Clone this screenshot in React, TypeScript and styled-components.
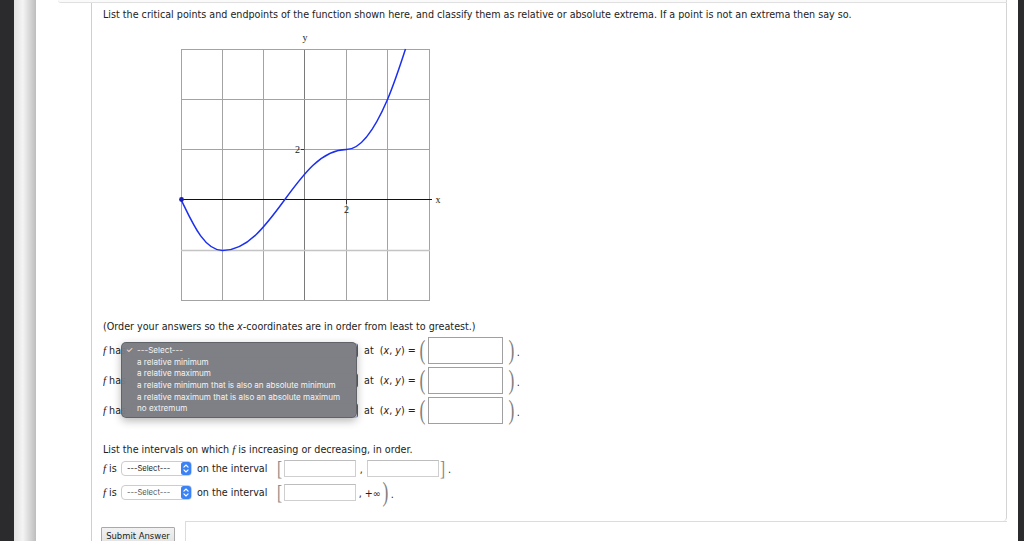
import React from 'react';
import styled, { createGlobalStyle } from 'styled-components';

const GlobalStyle = createGlobalStyle`
  html, body {
    margin: 0;
    padding: 0;
    background: #fff;
  }
  body {
    font-family: "DejaVu Sans", Verdana, sans-serif;
    color: #222;
  }
  * {
    box-sizing: border-box;
  }
`;

const Screen = styled.div`
  display: flex;
  width: 1024px;
  height: 541px;
  overflow: hidden;
`;

const DarkEdge = styled.div<{ $w: number }>`
  flex: 0 0 ${p => p.$w}px;
  background: #2b2b2e;
`;

const Shade = styled.div`
  flex: 0 0 22px;
  background: linear-gradient(to right, #e2e2e2 0%, #f4f4f4 40%, #bdbdbd 100%);
`;

const Main = styled.div`
  flex: 1;
  display: flex;
  flex-direction: column;
  padding-right: 11px;
  background: #fff;
`;

const TopStrip = styled.div`
  flex: none;
  height: 3px;
  margin-left: 22px;
  background: #fafafa;
  border-bottom: 1px solid #e0e0e0;
  border-right: 1px solid #d6d6d6;
  border-bottom-left-radius: 4px;
`;

const Panel = styled.div`
  flex: 1;
  margin-left: 55px;
  display: flex;
  flex-direction: column;
  border-left: 1px solid #cfcfcf;
`;

const QuestionBox = styled.div`
  flex: 0 0 518px;
  padding-left: 11px;
  border-right: 1px solid #d4d4d4;
  border-bottom-right-radius: 4px;
  font-size: 9.6px;
`;

const Line = styled.div<{ $mt: number }>`
  margin-top: ${p => p.$mt}px;
  height: 14px;
  line-height: 14px;
  font-size: 9.6px;
  white-space: nowrap;
`;

const Var = styled.i`
  font-family: "Liberation Serif", "DejaVu Serif", serif;
  font-size: 11px;
  font-style: italic;
`;

const SansVar = styled.i`
  font-style: italic;
`;

const GraphBox = styled.div`
  margin: 8px 0 0 67px;
  width: 280px;
  height: 280px;
  svg {
    display: block;
  }
`;

const Answers = styled.div`
  position: relative;
  margin-top: 1px;
`;

const AnswerRow = styled.div`
  display: flex;
  align-items: center;
  height: 30px;
  white-space: nowrap;
`;

const Has = styled.span`
  flex: 0 0 28px;
  overflow: hidden;
`;

const PointSelect = styled.div`
  flex: 0 0 227px;
  height: 15px;
  border: 1px solid #c8c8c8;
  border-right: 1px solid #3560c4;
  border-radius: 3px;
  background: #fff;
`;

const AtText = styled.span`
  margin-left: 6px;
`;

const Paren = styled.span<{ $ml: number }>`
  margin-left: ${p => p.$ml}px;
  font-family: "Liberation Serif", "DejaVu Serif", serif;
  font-size: 27px;
  line-height: 27px;
  color: #808080;
  transform: scaleX(0.65);
`;

const Dot = styled.span`
  font-size: 9.6px;
  align-self: center;
  margin-left: 1px;
  padding-top: 4px;
`;

const CoordInput = styled.input`
  margin-left: 1px;
  width: 75px;
  height: 27px;
  border: 1px solid #a0a0a0;
  border-radius: 0;
  background: #fff;
  padding: 0;
`;

const Menu = styled.div`
  position: absolute;
  left: 18px;
  top: 7px;
  width: 236px;
  height: 76px;
  padding: 2px 0 4px;
  background: rgba(122, 124, 130, 0.97);
  border: 1px solid rgba(90, 92, 98, 0.8);
  border-radius: 5px;
  box-shadow: 0 3px 9px rgba(0, 0, 0, 0.28);
  font-family: Inter, "Liberation Sans", sans-serif;
  font-size: 8.1px;
  color: #f4f4f4;
`;

const MenuItem = styled.div`
  position: relative;
  height: 11.7px;
  line-height: 11.7px;
  padding-left: 15px;
  white-space: nowrap;
`;

const Check = styled.span`
  position: absolute;
  left: 4px;
  top: 0;
  font-size: 8px;
`;

const IntervalRow = styled.div`
  display: flex;
  align-items: center;
  height: 24px;
  white-space: nowrap;
`;

const Is = styled.span`
  flex: 0 0 18px;
`;

const MiniSelect = styled.div<{ $muted?: boolean }>`
  flex: 0 0 71px;
  height: 15px;
  display: flex;
  align-items: center;
  justify-content: space-between;
  padding: 0 0 0 5px;
  border: 1px solid #cdcdcd;
  border-radius: 4px;
  background: #fff;
  font-family: Inter, "Liberation Sans", sans-serif;
  font-size: 7.6px;
  color: ${p => (p.$muted ? '#555' : '#222')};
  svg {
    display: block;
  }
`;

const OnText = styled.span`
  margin-left: 5px;
`;

const Bracket = styled.span<{ $ml: number }>`
  margin-left: ${p => p.$ml}px;
  font-family: "Liberation Serif", "DejaVu Serif", serif;
  font-size: 22px;
  line-height: 22px;
  color: #8a8a8a;
  transform: scaleX(0.7);
`;

const RangeInput = styled.input<{ $ml: number }>`
  margin-left: ${p => p.$ml}px;
  width: 72px;
  height: 17px;
  padding: 0;
  border: 1px solid #cfcfcf;
  border-top-color: #bdbdbd;
  border-radius: 0;
  background: #fff;
`;

const Comma = styled.span<{ $ml: number }>`
  margin-left: ${p => p.$ml}px;
  padding-top: 3px;
`;

const Footer = styled.div`
  display: flex;
  align-items: flex-start;
  flex: 1;
`;

const SubmitButton = styled.button`
  margin: 6px 0 0 9px;
  width: 74px;
  height: 17px;
  padding: 0;
  border: 1px solid #a9a9a9;
  border-radius: 1px;
  background: linear-gradient(#f2f2f2, #e2e2e2);
  font-family: "DejaVu Sans Condensed", "DejaVu Sans", Verdana, sans-serif;
  font-size: 9.4px;
  color: #222;
`;

const Tail = styled.div`
  flex: 1;
  align-self: stretch;
  margin-left: 10px;
  border-top: 1px solid #dcdcdc;
  border-left: 1px solid #dcdcdc;
`;

const Stepper = () => (
  <svg width="10" height="13" viewBox="0 0 10 13">
    <rect x="0" y="0" width="10" height="13" rx="2.5" fill="#3a82f6" />
    <path
      d="M2.9 5.2 L5 3 L7.1 5.2 M2.9 7.8 L5 10 L7.1 7.8"
      stroke="#fff"
      strokeWidth="1.1"
      fill="none"
      strokeLinecap="round"
      strokeLinejoin="round"
    />
  </svg>
);

const cols = [181.5, 222.5, 263.5, 304.5, 346.5, 387.5, 429.5];
const rows = [49.5, 99.5, 149.5, 199.5, 250.5, 300.5];

const Graph = () => (
  <svg width="280" height="280" viewBox="170 30 280 280">
    {cols.map(x => (
      <line key={`c${x}`} x1={x} y1={49} x2={x} y2={301} stroke={x === 304.5 ? '#7a7a7a' : '#a3a3a3'} strokeWidth="1" />
    ))}
    {rows.map(y =>
      y === 199.5 ? null : (
        <line
          key={`r${y}`}
          x1={181}
          y1={y}
          x2={430}
          y2={y}
          stroke={y === 250.5 ? '#c4c4c4' : '#a3a3a3'}
          strokeWidth={y === 250.5 ? 1.6 : 1}
        />
      )
    )}
    <line x1={181} y1={199.5} x2={432} y2={199.5} stroke="#111" strokeWidth="1" />
    <line x1={301} y1={149.5} x2={304.5} y2={149.5} stroke="#333" strokeWidth="1" />
    <line x1={346.5} y1={199.5} x2={346.5} y2={204} stroke="#333" strokeWidth="1" />
    <text x={305} y={41} fontFamily="Liberation Serif, DejaVu Serif, serif" fontSize="10" textAnchor="middle" fill="#222">
      y
    </text>
    <text x={438} y={203} fontFamily="Liberation Serif, DejaVu Serif, serif" fontSize="10" textAnchor="middle" fill="#222">
      x
    </text>
    <text x={300} y={153} fontFamily="Liberation Serif, DejaVu Serif, serif" fontSize="10" textAnchor="end" fill="#222">
      2
    </text>
    <text x={346.5} y={213} fontFamily="Liberation Serif, DejaVu Serif, serif" fontSize="10" textAnchor="middle" fill="#222">
      2
    </text>
    <path
      d="M181,199.5 C192,222 204,250.5 222.5,250.5 C272.5,250.5 296.5,149.5 346.5,149.5 C362,149.5 377,124 387.5,99.5 C394,84 400,66 405.5,49"
      stroke="#1a2ff0"
      strokeWidth="1.5"
      fill="none"
    />
    <circle cx={181.5} cy={199.5} r={2.4} fill="#1b1fb0" />
  </svg>
);

const menuOptions = [
  '---Select---',
  'a relative minimum',
  'a relative maximum',
  'a relative minimum that is also an absolute minimum',
  'a relative maximum that is also an absolute maximum',
  'no extremum',
];

const PointRow = () => (
  <AnswerRow>
    <Has>
      <Var>f</Var> has
    </Has>
    <PointSelect />
    <AtText>
      at &nbsp;(<SansVar>x</SansVar>, <SansVar>y</SansVar>) =
    </AtText>
    <Paren $ml={2}>(</Paren>
    <CoordInput type="text" />
    <Paren $ml={4}>)</Paren>
    <Dot>.</Dot>
  </AnswerRow>
);

export default function App() {
  return (
    <>
      <GlobalStyle />
      <Screen>
        <DarkEdge $w={14} />
        <Shade />
        <Main>
          <TopStrip />
          <Panel>
            <QuestionBox>
              <Line $mt={5}>
                List the critical points and endpoints of the function shown here, and classify them as relative or
                absolute extrema. If a point is not an extrema then say so.
              </Line>
              <GraphBox>
                <Graph />
              </GraphBox>
              <Line $mt={10}>
                (Order your answers so the <SansVar>x</SansVar>-coordinates are in order from least to greatest.)
              </Line>
              <Answers>
                <PointRow />
                <PointRow />
                <PointRow />
                <Menu>
                  {menuOptions.map((o, i) => (
                    <MenuItem key={o}>
                      {i === 0 && <Check>✓</Check>}
                      {o}
                    </MenuItem>
                  ))}
                </Menu>
              </Answers>
              <Line $mt={17}>
                List the intervals on which <Var>f</Var> is increasing or decreasing, in order.
              </Line>
              <IntervalRow>
                <Is>
                  <Var>f</Var> is
                </Is>
                <MiniSelect>
                  ---Select---
                  <Stepper />
                </MiniSelect>
                <OnText>on the interval</OnText>
                <Bracket $ml={9}>[</Bracket>
                <RangeInput type="text" $ml={0} />
                <Comma $ml={4}>,</Comma>
                <RangeInput type="text" $ml={4} />
                <Bracket $ml={0}>]</Bracket>
                <Comma $ml={2}>.</Comma>
              </IntervalRow>
              <IntervalRow>
                <Is>
                  <Var>f</Var> is
                </Is>
                <MiniSelect $muted>
                  ---Select---
                  <Stepper />
                </MiniSelect>
                <OnText>on the interval</OnText>
                <Bracket $ml={9}>[</Bracket>
                <RangeInput type="text" $ml={0} />
                <Comma $ml={3}>, +∞</Comma>
                <Paren $ml={0}>)</Paren>
                <Dot>.</Dot>
              </IntervalRow>
            </QuestionBox>
            <Footer>
              <SubmitButton type="button">Submit Answer</SubmitButton>
              <Tail />
            </Footer>
          </Panel>
        </Main>
        <DarkEdge $w={6} />
      </Screen>
    </>
  );
}
